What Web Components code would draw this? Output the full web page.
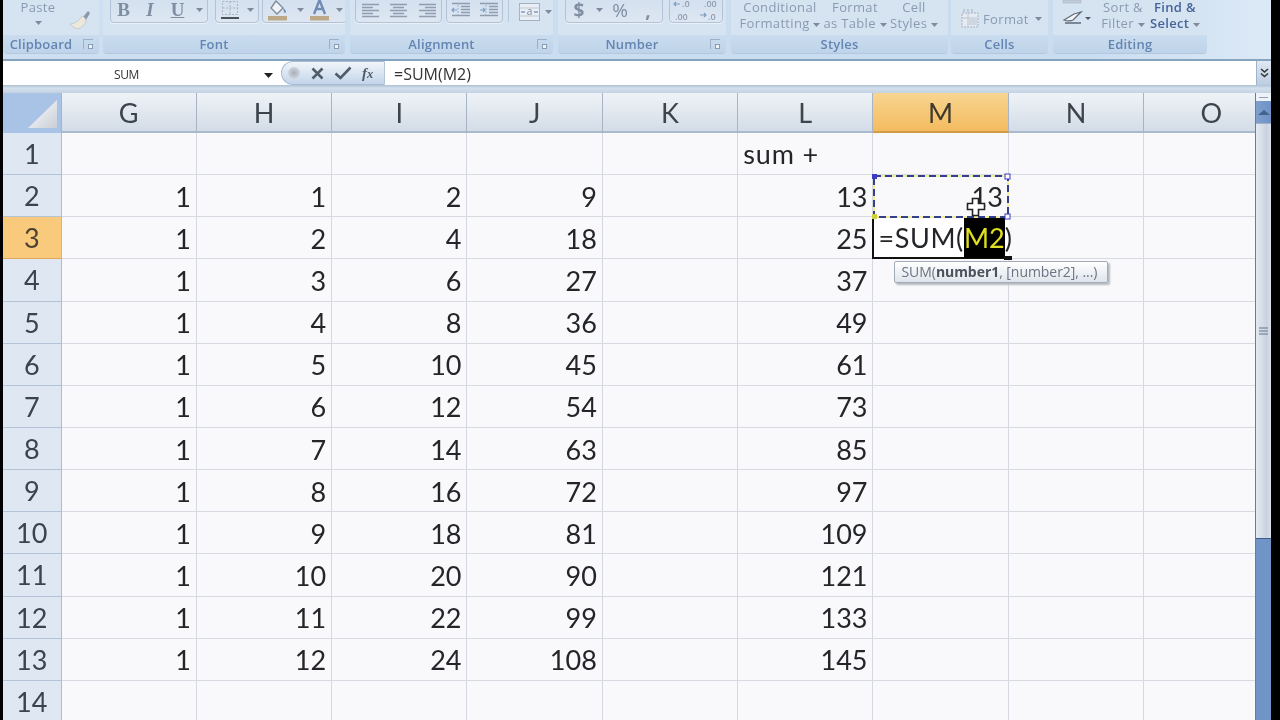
<!DOCTYPE html>
<html>
<head>
<meta charset="utf-8">
<title>Sheet</title>
<style>
  html, body { margin: 0; height: 100%; background: #000; overflow: hidden; }
</style>
</head>
<body>
<x-app>
  <x-ribbon>
    <x-group label="Clipboard" w="96" launcher pad="19">
      <x-stack w="32" top="-1"><span>Paste</span><span style="margin-top:-2px"><x-ic n="arrow"></x-ic></span></x-stack>
      <x-ic n="brush" style="margin:10px 0 0 16px"></x-ic>
    </x-group>
    <x-group label="Font" w="242" launcher pad="7">
      <x-cluster>
        <x-tool w="25"><b class="serif">B</b></x-tool><x-tool w="28"><i class="serif">I</i></x-tool><x-tool w="27"><u class="serif">U</u></x-tool><x-tool w="16"><x-ic n="arrow"></x-ic></x-tool>
      </x-cluster>
      <x-cluster gap="7"><x-tool w="27"><x-ic n="borders"></x-ic></x-tool><x-tool w="15"><x-ic n="arrow"></x-ic></x-tool></x-cluster>
      <x-cluster gap="3">
        <x-tool w="30"><x-ic n="bucket"></x-ic></x-tool><x-tool w="14"><x-ic n="arrow"></x-ic></x-tool><x-tool w="25"><x-ic n="fontcolor"></x-ic></x-tool><x-tool w="14"><x-ic n="arrow"></x-ic></x-tool>
      </x-cluster>
    </x-group>
    <x-group label="Alignment" w="203" launcher pad="5">
      <x-cluster><x-tool w="28"><x-ic n="alignl"></x-ic></x-tool><x-tool w="29"><x-ic n="alignc"></x-ic></x-tool><x-tool w="28"><x-ic n="alignr"></x-ic></x-tool></x-cluster>
      <x-cluster gap="4"><x-tool w="28"><x-ic n="outdent"></x-ic></x-tool><x-tool w="27"><x-ic n="indent"></x-ic></x-tool></x-cluster>
      <x-ic n="sep" style="margin-left:5px"></x-ic>
      <x-tool w="30" style="margin-left:5px"><x-ic n="merge"></x-ic></x-tool><x-tool w="8"><x-ic n="arrow"></x-ic></x-tool>
    </x-group>
    <x-group label="Number" w="168" launcher pad="7">
      <x-cluster><x-tool w="26"><b class="sans">$</b></x-tool><x-tool w="14"><x-ic n="arrow"></x-ic></x-tool><x-tool w="28"><span class="sans">%</span></x-tool><x-tool w="28"><b class="sans">,</b></x-tool></x-cluster>
      <x-cluster gap="6"><x-tool w="26"><x-ic n="incdec"></x-ic></x-tool><x-tool w="26"><x-ic n="decdec"></x-ic></x-tool></x-cluster>
    </x-group>
    <x-group label="Styles" w="217" pad="4">
      <x-stack w="90"><span>Conditional</span><span>Formatting <x-ic n="arrow"></x-ic></span></x-stack>
      <x-stack w="60"><span>Format</span><span>as Table <x-ic n="arrow"></x-ic></span></x-stack>
      <x-stack w="58"><span>Cell</span><span>Styles <x-ic n="arrow"></x-ic></span></x-stack>
    </x-group>
    <x-group label="Cells" w="97" pad="9">
      <x-ic n="format" style="margin-top:8px"></x-ic>
      <x-stack w="68" top="11" row><span>Format</span><x-ic n="arrow" style="margin-left:6px"></x-ic></x-stack>
    </x-group>
    <x-group label="Editing" w="154" pad="10">
      <x-ic n="eraser"></x-ic>
      <x-stack w="60"><span>Sort &amp;</span><span>Filter <x-ic n="arrow"></x-ic></span></x-stack>
      <x-stack w="44" dark><span>Find &amp;</span><span>Select <x-ic n="arrow"></x-ic></span></x-stack>
    </x-group>
  </x-ribbon>
  <x-formula-bar name="SUM" value="=SUM(M2)"></x-formula-bar>
  <x-sheet-area>
    <x-sheet></x-sheet>
    <x-scrollbar></x-scrollbar>
  </x-sheet-area>
</x-app>

<script>
(function () {
  const RIB_TEXT = '#8a9ab1', LABEL = '#6484b2', ICON = '#8f9db0';
  const CELL_FONT = "Lato, 'Noto Sans', sans-serif";
  const UI_FONT = "'Open Sans', 'Noto Sans', sans-serif";

  // ribbon and bar glyphs; every entry is [width, height, inner svg]
  const lines = (rows, stroke) => rows.map(([x1, x2], i) => `<path d="M${x1} ${2.5 + i * 3}H${x2}" stroke="${stroke || ICON}" stroke-width="1.6"/>`).join('');
  const dec = (x, y, t) => `<text x="${x}" y="${y}" font-size="9" font-family="${UI_FONT}" font-weight="600" fill="#8f9db0">${t}</text>`;
  const ICONS = {
    arrow: [7, 4, `<path d="M0 0h7L3.5 4z" fill="#7f8b9c"/>`],
    sep: [1, 22, `<rect width="1" height="22" fill="#b9c8d8"/>`],
    brush: [20, 19, `<path d="M13 7l5-6 2 2-4 7z" fill="#8a97a8"/><path d="M12 6c3 1 4 4 4 5-1 4-5 7-8 8-3-1-7-3-8-5 4 0 9-3 12-8z" fill="#ece8dc" stroke="#b9bfc6" stroke-width=".7"/>`],
    borders: [20, 20, `<path d="M2.5 1.5h15v13h-15zM10 1.5v13M2.5 8h15" fill="none" stroke="#a9b3c2" stroke-dasharray="2 1.5"/><path d="M1 18h18" stroke="#4a525c" stroke-width="2"/>`],
    bucket: [22, 22, `<path d="M9 2l7 7-6 6-6-6z" fill="#f1f3f6" stroke="#7f8d9f" stroke-width="1.4"/><path d="M16 9c2 1 3 3 3 4s-2 1-2 0z" fill="#6f8db5"/><rect x="1" y="17" width="19" height="4.5" fill="#bda987"/>`],
    fontcolor: [19, 22, `<path d="M4 15L9.5 1 15 15M6 10h7" fill="none" stroke="#6f8cb6" stroke-width="2.4"/><rect x="0" y="17" width="19" height="4.5" fill="#bda987"/>`],
    alignl: [19, 16, lines([[1, 18], [1, 12], [1, 18], [1, 12], [1, 18]])],
    alignc: [19, 16, lines([[1, 18], [4, 15], [1, 18], [4, 15], [1, 18]])],
    alignr: [19, 16, lines([[1, 18], [7, 18], [1, 18], [7, 18], [1, 18]])],
    outdent: [20, 18, lines([[1, 19], [10, 19], [10, 19], [10, 19], [1, 19]]) + `<path d="M7 4v10" stroke="#9fb1c8" stroke-dasharray="2 1"/><path d="M6 9H1m2-2L1 9l2 2" fill="none" stroke="#7f9cc2" stroke-width="1.2"/>`],
    indent: [20, 18, lines([[1, 19], [10, 19], [10, 19], [10, 19], [1, 19]]) + `<path d="M7 4v10" stroke="#9fb1c8" stroke-dasharray="2 1"/><path d="M1 9h5M4 7l2 2-2 2" fill="none" stroke="#7f9cc2" stroke-width="1.2"/>`],
    merge: [21, 18, `<rect x=".5" y=".5" width="20" height="17" fill="#e9eef5" stroke="#a5b1c2"/><path d="M.5 5h20M.5 13h20" stroke="#c0c9d6"/><path d="M2 9h4M15 9h4" stroke="#7f9cc2" stroke-width="1.4"/><text x="10.5" y="12" text-anchor="middle" font-size="10" font-family="${UI_FONT}" fill="#7d8796">a</text>`],
    incdec: [20, 20, `<path d="M7 4H1m2-2L1 4l2 2" fill="none" stroke="#7f9cc2" stroke-width="1.2"/>` + dec(9, 7, '.0') + dec(2, 19.5, '.00')],
    decdec: [20, 20, dec(5, 7, '.00') + `<path d="M1 15h6M5 13l2 2-2 2" fill="none" stroke="#7f9cc2" stroke-width="1.2"/>` + dec(9, 19.5, '.0')],
    format: [20, 20, `<rect x="2" y="5" width="16" height="14" fill="#e6ebf2" stroke="#a5afbe" stroke-dasharray="2 1"/><path d="M2 10h16M8 5v14" stroke="#bcc5d2"/><path d="M4 1v3M8 1v3M12 1v3" stroke="#a5afbe"/><rect x="9" y="11" width="8" height="6" fill="#cdd6e2"/>`],
    eraser: [30, 26, `<rect x="0" y="0" width="18" height="3" fill="#c3ccd8" stroke="#a9b4c4" stroke-width=".6"/><path d="M11 14l7-2-8 8c-2 1-6 1-9 0z" fill="#f5f6f8" stroke="#5f6a78" stroke-width="1.3"/><path d="M2 23h16" stroke="#5f6a78" stroke-width="1.3"/><path d="M22 17h6l-3 3z" fill="#4f5864"/>`],
    drop: [9, 5, `<path d="M0 0h9L4.5 5z" fill="#222"/>`],
    cross: [13, 13, `<path d="M1.5 1.5L6.5 6.5 11.5 1.5M1.5 11.5L6.5 6.5 11.5 11.5" fill="none" stroke="#4f5c6c" stroke-width="2.6"/>`],
    check: [18, 14, `<path d="M1.5 7.5L6.5 12 16.5 1.5" fill="none" stroke="#4f5c6c" stroke-width="2.6"/>`],
    chevrons: [9, 10, `<path d="M1 1l3.5 3L8 1M1 5.5l3.5 3 3.5-3" fill="none" stroke="#333" stroke-width="1.6"/>`],
    up: [12, 5, `<path d="M0 5L6 0l6 5z" fill="#45628c"/>`],
    grip: [9, 9, `<path d="M0 1h9M0 4h9M0 7h9" stroke="#8995a6" stroke-width="1.3"/>`],
  };

  function define(name, css, html, init) {
    customElements.define(name, class extends HTMLElement {
      connectedCallback() {
        if (this._init) return; this._init = true;
        const root = this.attachShadow({ mode: 'open' });
        root.innerHTML = `<style>${css}</style>${html}`;
        if (init) init.call(this, root);
      }
    });
  }

  define('x-ic', `:host { display:inline-block; line-height:0; vertical-align:middle; flex:none; } svg { display:block; overflow:visible; }`, '', function (root) {
    const [w, h, body] = ICONS[this.getAttribute('n')];
    root.innerHTML += `<svg width="${w}" height="${h}" viewBox="0 0 ${w} ${h}">${body}</svg>`;
  });

  define('x-app', `:host { display:flex; flex-direction:column; height:720px; padding:0 9px 0 3px; overflow:hidden; filter:blur(.5px); }`, `<slot></slot>`);

  define('x-ribbon', `:host { display:flex; flex:none; height:53px; padding-bottom:6px; background:linear-gradient(90deg,#cddff1,#c9dcf0 85%,#dce9f6); border-bottom:2px solid #86a3bf; }`, `<slot></slot>`);

  define('x-group', `
    :host { display:flex; flex-direction:column; flex:none; height:53px; margin-right:5px; border-radius:0 0 4px 4px; overflow:hidden;
            background:#d6e4f2; box-shadow:0 1px 0 #b4c8dd; }
    .body { display:flex; align-items:flex-start; height:35px; box-sizing:border-box; overflow:visible; }
    .label { position:relative; height:18px; display:flex; align-items:center; justify-content:center; box-sizing:border-box; background:linear-gradient(#cadcef,#bed4ea);
             font:600 13px/18px ${UI_FONT}; letter-spacing:.2px; color:${LABEL}; }
    .launch { position:absolute; right:6px; top:4px; width:9px; height:9px; border:1px solid #9fb0c4; border-width:1px 0 0 1px; }
    .launch::after { content:''; position:absolute; right:0; bottom:0; width:5px; height:5px; background:#eef3f8; border:1px solid #8a9db5; box-sizing:border-box; }
  `, `<div class="body"><slot></slot></div><div class="label"></div>`, function (root) {
    this.style.width = this.getAttribute('w') + 'px';
    root.querySelector('.body').style.paddingLeft = this.getAttribute('pad') + 'px';
    const lab = root.querySelector('.label');
    lab.textContent = this.getAttribute('label');
    if (this.hasAttribute('launcher')) {
      lab.style.paddingRight = '20px';
      lab.insertAdjacentHTML('beforeend', '<span class="launch"></span>');
    }
    const gaps = { Styles: 3, Clipboard: 4 };
    if (gaps[this.getAttribute('label')]) this.style.marginRight = gaps[this.getAttribute('label')] + 'px';
  });

  // rounded frame holding a row of tools; the frame top is cut off by the window edge
  define('x-cluster', `
    :host { display:flex; flex:none; height:26px; margin-top:-3px; box-sizing:border-box; border:1px solid #b3c3d5; border-radius:4px;
            background:linear-gradient(#d3e0ee,#dde7f2); box-shadow:0 1px 0 #e9f0f7; }
  `, `<slot></slot>`, function () {
    if (this.hasAttribute('gap')) this.style.marginLeft = this.getAttribute('gap') + 'px';
  });

  define('x-tool', `
    :host { display:flex; flex:none; align-items:center; justify-content:center; height:24px; color:#7f8ea2; font-size:18px; }
    ::slotted(.serif) { font-family:'Liberation Serif',serif; font-size:19px; font-weight:bold; }
    ::slotted(.sans) { font-family:${UI_FONT}; font-size:19px; }
  `, `<slot></slot>`, function () {
    this.style.width = this.getAttribute('w') + 'px';
  });

  // two centred lines of ribbon text
  define('x-stack', `
    :host { display:flex; flex:none; flex-direction:column; align-items:center; font:400 13px/16px ${UI_FONT}; letter-spacing:.35px; color:${RIB_TEXT}; white-space:nowrap; }
    :host([dark]) { color:#46649a; font-weight:600; }
    :host([row]) { flex-direction:row; justify-content:flex-start; padding-left:3px; box-sizing:border-box; }
  `, `<slot></slot>`, function () {
    this.style.width = this.getAttribute('w') + 'px';
    this.style.marginTop = (this.getAttribute('top') || '-1') + 'px';
  });

  define('x-formula-bar', `
    :host { display:flex; flex:none; height:32px; box-sizing:border-box; padding-bottom:8px; background:linear-gradient(#fff 0,#fff 24px,#aebfd3 24px,#d3dfec 27px,#c3d2e3); font-family:${UI_FONT}; }
    .name { flex:none; width:278px; position:relative; display:flex; align-items:center; box-sizing:border-box; padding:2px 0 0 111px; font-size:12px; letter-spacing:-.4px; color:#333; }
    .name x-ic { position:absolute; right:8px; top:12px; }
    .btns { flex:none; width:104px; height:24px; box-sizing:border-box; display:flex; align-items:center; border:1px solid #a7bdd6; border-right-color:#b6c6d9; border-radius:13px 0 0 13px;
            background:linear-gradient(#f1f5fa,#c3d5e9); padding-left:6px; }
    .dot { width:12px; height:12px; border-radius:50%; background:radial-gradient(#a9afb8,#dde4ec); margin-right:11px; }
    .fx { font:italic 600 15px/20px 'Liberation Serif',serif; color:#4f5c6c; margin-left:10px; }
    .val { flex:1; padding:1px 0 0 9px; font-size:16px; line-height:24px; color:#333; }
    .more { flex:none; width:15px; height:24px; display:flex; align-items:center; justify-content:center; background:linear-gradient(#dfe8f3,#bccde1); border-left:1px solid #9fb4cc; box-sizing:border-box; }
  `, `<div class="name"><span></span><x-ic n="drop"></x-ic></div>
      <div class="btns"><span class="dot"></span><x-ic n="cross"></x-ic><x-ic n="check" style="margin-left:10px"></x-ic><span class="fx">f<small>x</small></span></div>
      <div class="val"></div><div class="more"><x-ic n="chevrons"></x-ic></div>`, function (root) {
    root.querySelector('.name span').textContent = this.getAttribute('name');
    root.querySelector('.val').textContent = this.getAttribute('value');
  });

  define('x-sheet-area', `:host { display:flex; flex:1; min-height:0; }`, `<slot></slot>`);

  define('x-scrollbar', `
    :host { display:flex; flex-direction:column; flex:none; width:16px; background:#7094c5; border-left:1px solid #5d7eae; box-sizing:border-box; }
    .split { height:8px; background:#eef3f9; display:flex; align-items:center; justify-content:center; }
    .split i { width:9px; height:1px; background:#8fa3bc; }
    .up { height:22px; background:linear-gradient(90deg,#7f9fcd,#6f93c6); display:flex; align-items:center; justify-content:center; }
    .thumb { height:416px; box-sizing:border-box; display:flex; align-items:center; justify-content:center; background:linear-gradient(90deg,#e4eaf2,#c9d3e0 70%,#d9e0ea); border-bottom:1px solid #3f5c8c; border-top:1px solid #9fb2ca; }
  `, `<div class="split"><i></i></div><div class="up"><x-ic n="up"></x-ic></div><div class="thumb"><x-ic n="grip"></x-ic></div>`);

  // tooltip sits over the cells below M3
  define('x-tip', `
    :host { position:absolute; left:21px; top:44px; width:214px; height:22px; box-sizing:border-box; padding-left:6px; z-index:5; white-space:nowrap;
            font:400 14px/20px ${UI_FONT}; letter-spacing:-.05px; color:#6a7482; border:1px solid #a2abb8; border-radius:2px; background:linear-gradient(#fff,#dfe4ec); box-shadow:2px 2px 2px #b5b9c0; }
    b { color:#4a525e; }
  `, `SUM(<b>number1</b>, [number2], ...)`);

  const COLS = ['G', 'H', 'I', 'J', 'K', 'L', 'M', 'N', 'O'];
  const DATA = {
    1: { L: ['sum +', 'l'] },
    2: { G: 1, H: 1, I: 2, J: 9, L: 13, M: 13 },
  };
  for (let i = 1; i <= 11; i++) DATA[i + 2] = { G: 1, H: i + 1, I: (i + 1) * 2, J: (i + 1) * 9, L: 13 + 12 * i };

  define('x-sheet', `
    :host { display:grid; flex:1; min-width:0; grid-template-columns:58.5px repeat(9,135.33px); grid-template-rows:40px repeat(14,42.15px); overflow:hidden;
            background:#f9f9fb; font:400 27px/1 ${CELL_FONT}; color:#232529; }
    .corner { background:#a9c3e6; position:relative; border-right:1px solid #9db4d2; }
    .corner svg { position:absolute; left:0; top:0; }
    .ch { display:flex; align-items:center; justify-content:center; box-sizing:border-box; padding-top:1px; border-right:1px solid #a8b4c4; border-bottom:2px solid #a9bace; background:linear-gradient(#eff3f7,#d3dce7); color:#3c444d; }
    .ch.on { background:linear-gradient(#f8d590,#f4bb60); border-bottom-color:#d69b45; color:#3f3a2c; }
    .rh { display:flex; align-items:center; justify-content:center; box-sizing:border-box; border-right:1px solid #a9bcd2; border-bottom:1px solid #b4c3d5; background:#dfe8f2; color:#3a444e; }
    .rh.on { background:#f9ca7c; border-bottom-color:#dfa85a; color:#4a4232; }
    .c { position:relative; display:flex; align-items:center; justify-content:flex-end; box-sizing:border-box; padding:1px 5px 0 5px; border-right:1px solid #d5d8e0; border-bottom:1px solid #d8dae2; }
    .c.l { justify-content:flex-start; letter-spacing:.9px; padding-top:0; }
    .ants { position:absolute; left:0; right:0; top:0; bottom:0; z-index:3; pointer-events:none; }
    .edit { position:absolute; left:-1px; right:-1px; top:0; bottom:-1px; z-index:2; box-sizing:border-box; background:#fff; border-left:2px solid #111; border-bottom:2px solid #111; display:flex; align-items:center; padding-left:4px; white-space:nowrap; overflow:visible; letter-spacing:.6px; }
    .edit mark { background:#000; color:#dfe01f; padding:7.5px 0; letter-spacing:0; }
    .handle { position:absolute; right:-4px; bottom:-2px; width:8px; height:4px; background:#111; z-index:4; }
    .cur { position:absolute; left:93px; top:22px; z-index:6; }
  `, '', function (root) {
    let h = `<div class="corner"><svg width="58" height="40"><defs><linearGradient id="t" x1="0" x2="1" y1="0" y2="1"><stop offset="0" stop-color="#fff"/><stop offset="1" stop-color="#c9ced6"/></linearGradient></defs><path d="M54 7V35H25z" fill="url(#t)"/></svg></div>`;
    for (const c of COLS) h += `<div class="ch${c === 'M' ? ' on' : ''}">${c}</div>`;
    for (let r = 1; r <= 14; r++) {
      h += `<div class="rh${r === 3 ? ' on' : ''}">${r}</div>`;
      for (const c of COLS) {
        let v = DATA[r] && DATA[r][c], cls = 'c', extra = '';
        if (v === undefined) v = '';
        if (Array.isArray(v)) { cls += ' l'; v = v[0]; }
        if (r === 2 && c === 'M') extra = `<svg class="ants" width="136" height="42" style="left:0;top:0;overflow:visible">
            <rect x="1" y="1" width="134" height="41" fill="none" stroke="#f2ee9a" stroke-width="2"/>
            <rect x="1" y="1" width="134" height="41" fill="none" stroke="#33408c" stroke-width="2" stroke-dasharray="7 4"/>
            <rect x="-1" y="-1" width="5" height="5" fill="#3b3bc8"/><rect x="132" y="-1" width="5" height="5" fill="#fff" stroke="#3b3bc8"/><rect x="-1" y="39" width="5" height="5" fill="#cfcf40"/><rect x="132" y="39" width="5" height="5" fill="#fff" stroke="#3b3bc8"/></svg>
            <svg class="cur" width="20" height="20" viewBox="0 0 20 20"><path d="M6.5 1.5h6v5h6v6h-6v6h-6v-6h-5v-6h5z" fill="#fff" stroke="#222" stroke-width="1.6"/></svg>`;
        if (r === 3 && c === 'M') extra = `<div class="edit">=SUM(<mark>M2</mark>)</div><span class="handle"></span><x-tip></x-tip>`;
        h += `<div class="${cls}">${v}${extra}</div>`;
      }
    }
    root.innerHTML += h;
  });
})();
</script>
</body>
</html>
